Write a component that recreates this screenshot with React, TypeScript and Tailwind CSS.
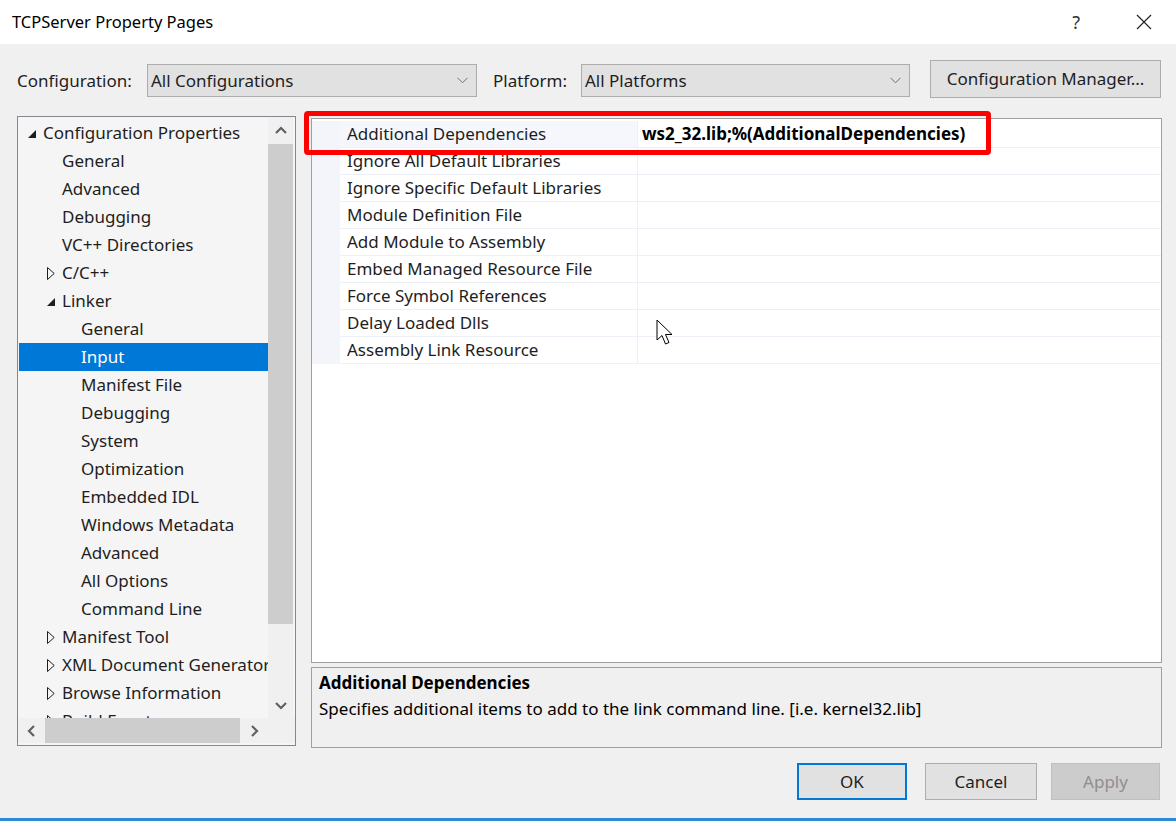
import React from "react";

type TreeItem = {
  label: string;
  level: 0 | 1 | 2;
  arrow?: "open" | "closed";
  selected?: boolean;
};

const treeItems: TreeItem[] = [
  { label: "Configuration Properties", level: 0, arrow: "open" },
  { label: "General", level: 1 },
  { label: "Advanced", level: 1 },
  { label: "Debugging", level: 1 },
  { label: "VC++ Directories", level: 1 },
  { label: "C/C++", level: 1, arrow: "closed" },
  { label: "Linker", level: 1, arrow: "open" },
  { label: "General", level: 2 },
  { label: "Input", level: 2, selected: true },
  { label: "Manifest File", level: 2 },
  { label: "Debugging", level: 2 },
  { label: "System", level: 2 },
  { label: "Optimization", level: 2 },
  { label: "Embedded IDL", level: 2 },
  { label: "Windows Metadata", level: 2 },
  { label: "Advanced", level: 2 },
  { label: "All Options", level: 2 },
  { label: "Command Line", level: 2 },
  { label: "Manifest Tool", level: 1, arrow: "closed" },
  { label: "XML Document Generator", level: 1, arrow: "closed" },
  { label: "Browse Information", level: 1, arrow: "closed" },
  { label: "Build Events", level: 1, arrow: "closed" },
];

const properties: { name: string; value?: string }[] = [
  { name: "Additional Dependencies", value: "ws2_32.lib;%(AdditionalDependencies)" },
  { name: "Ignore All Default Libraries" },
  { name: "Ignore Specific Default Libraries" },
  { name: "Module Definition File" },
  { name: "Add Module to Assembly" },
  { name: "Embed Managed Resource File" },
  { name: "Force Symbol References" },
  { name: "Delay Loaded Dlls" },
  { name: "Assembly Link Resource" },
];

const indent: Record<number, string> = {
  0: "w-0",
  1: "w-[19px]",
  2: "w-[38px]",
};

function Arrow({ kind }: { kind?: "open" | "closed" }) {
  if (kind === "open") {
    return (
      <svg width="8" height="8" viewBox="0 0 8 8" className="mt-[1px]">
        <polygon points="8,0 8,8 0,8" fill="#1e1e1e" />
      </svg>
    );
  }
  if (kind === "closed") {
    return (
      <svg width="8" height="13" viewBox="0 0 8 13">
        <polygon points="0.5,0.5 7.2,6.5 0.5,12.5" fill="none" stroke="#1e1e1e" strokeWidth="1" />
      </svg>
    );
  }
  return null;
}

function Chevron({ dir }: { dir: "up" | "down" | "left" | "right" }) {
  const pts: Record<string, string> = {
    up: "1,7 6,2 11,7",
    down: "1,2 6,7 11,2",
    left: "7,1 2,6 7,11",
    right: "2,1 7,6 2,11",
  };
  const vertical = dir === "up" || dir === "down";
  return (
    <svg width={vertical ? 12 : 9} height={vertical ? 9 : 12} viewBox={vertical ? "0 0 12 9" : "0 0 9 12"}>
      <polyline points={pts[dir]} fill="none" stroke="#606060" strokeWidth="2.2" />
    </svg>
  );
}

function DropChevron() {
  return (
    <svg width="11" height="7" viewBox="0 0 11 7">
      <polyline points="0.5,0.8 5.5,5.8 10.5,0.8" fill="none" stroke="#707070" strokeWidth="1" />
    </svg>
  );
}

function Dropdown({ value, width }: { value: string; width: string }) {
  return (
    <div
      className={`${width} h-[33px] mt-[4px] border border-[#adadad] bg-[#e1e1e1] flex items-center justify-between pl-[3px] pr-[8px]`}
    >
      <span>{value}</span>
      <DropChevron />
    </div>
  );
}

function Tree() {
  return (
    <div className="w-[279px] h-[630px] border border-[#828790] bg-[#f5f5f5] flex flex-col">
      <div className="flex flex-1 min-h-0">
        <div className="w-[250px] overflow-hidden pt-[2px]">
          {treeItems.map((item, i) => (
            <div
              key={i}
              className={`h-[28px] flex items-center whitespace-nowrap ${
                item.selected ? "bg-[#0078d7] text-white ml-[1px]" : "text-[#1e1e1e]"
              }`}
            >
              <div className={`${indent[item.level]} shrink-0`} />
              <div className={`${item.selected ? "w-[24px]" : "w-[25px]"} shrink-0 flex items-center pl-[10px]`}>
                <Arrow kind={item.arrow} />
              </div>
              <span>{item.label}</span>
            </div>
          ))}
        </div>
        <div className="w-[25px] flex flex-col bg-[#f0f0f0]">
          <div className="h-[27px] flex items-center justify-center">
            <Chevron dir="up" />
          </div>
          <div className="h-[480px] bg-[#cdcdcd]" />
          <div className="flex-1" />
          <div className="h-[25px] flex items-center justify-center">
            <Chevron dir="down" />
          </div>
        </div>
      </div>
      <div className="h-[25px] flex bg-[#f0f0f0] mb-[2px]">
        <div className="w-[27px] flex items-center justify-center">
          <Chevron dir="left" />
        </div>
        <div className="w-[195px] bg-[#cdcdcd]" />
        <div className="w-[28px] flex items-center justify-center">
          <Chevron dir="right" />
        </div>
        <div className="w-[25px] bg-[#f0f0f0]" />
      </div>
    </div>
  );
}

function PropertyGrid() {
  return (
    <div className="h-[545px] mt-[2px] border border-[#a0a0a0] bg-white pt-[2px]">
      {properties.map((p, i) => (
        <div key={p.name} className="h-[27px] flex">
          <div className="w-[28px] bg-[#f3f5fa] shrink-0" />
          <div
            className={`w-[298px] shrink-0 pl-[7px] flex items-center border-b border-r border-[#edf1f7] ${
              i === 0 ? "bg-[#f5f7fc]" : ""
            }`}
          >
            {p.name}
          </div>
          <div className="flex-1 pl-[4px] flex items-center border-b border-[#edf1f7] font-bold text-black">
            {p.value}
          </div>
        </div>
      ))}
    </div>
  );
}

function Button({
  label,
  width,
  primary,
  disabled,
}: {
  label: string;
  width: string;
  primary?: boolean;
  disabled?: boolean;
}) {
  return (
    <div
      className={`${width} h-[37px] flex items-center justify-center ${
        primary
          ? "border-2 border-[#0078d7] bg-[#e1e1e1]"
          : disabled
          ? "border border-[#bfbfbf] bg-[#cccccc] text-[#8f8f8f]"
          : "border border-[#adadad] bg-[#e1e1e1]"
      }`}
    >
      {label}
    </div>
  );
}

function Cursor() {
  return (
    <svg width="20" height="28" viewBox="0 0 20 28" className="absolute left-[656px] top-[319px]">
      <path
        d="M1,1 L1,21 L6,16.5 L9.5,25 L13,23.5 L9.5,15.5 L16,15.5 Z"
        fill="#fff"
        stroke="#000"
        strokeWidth="1"
        strokeLinejoin="round"
      />
    </svg>
  );
}

export default function App() {
  return (
    <div
      className="w-[1176px] h-[821px] bg-[#f0f0f0] flex flex-col relative overflow-hidden text-[17px] text-[#1e1e1e]"
      style={{ fontFamily: '"Noto Sans", "Open Sans", sans-serif' }}
    >
      {/* title bar */}
      <div className="h-[44px] bg-white flex items-center pl-[12px] shrink-0">
        <span className="text-[16.5px] text-black">TCPServer Property Pages</span>
        <div className="flex-1" />
        <span className="text-[18px] text-[#333] mr-[56px]">?</span>
        <svg width="16" height="16" viewBox="0 0 16 16" className="mr-[24px]">
          <path d="M1,1 L15,15 M15,1 L1,15" stroke="#222" strokeWidth="1.2" />
        </svg>
      </div>

      {/* configuration row */}
      <div className="h-[38px] mt-[16px] flex items-start pl-[17px] shrink-0">
        <div className="w-[130px] h-[33px] mt-[4px] flex items-center">Configuration:</div>
        <Dropdown value="All Configurations" width="w-[330px]" />
        <div className="w-[88px] h-[33px] mt-[4px] ml-[16px] flex items-center">Platform:</div>
        <Dropdown value="All Platforms" width="w-[329px]" />
        <div className="w-[231px] h-[38px] ml-[20px] border border-[#adadad] bg-[#e1e1e1] flex items-center justify-center">
          Configuration Manager...
        </div>
      </div>

      {/* main */}
      <div className="flex mt-[18px] pl-[17px] shrink-0">
        <Tree />
        <div className="w-[851px] ml-[15px] flex flex-col">
          <PropertyGrid />
          <div className="h-[81px] mt-[4px] border border-[#a0a0a0] bg-[#f0f0f0] pl-[7px] pt-[2px]">
            <div className="font-bold text-black">Additional Dependencies</div>
            <div className="text-black">
              Specifies additional items to add to the link command line. [i.e. kernel32.lib]
            </div>
          </div>
        </div>
      </div>

      {/* buttons */}
      <div className="flex justify-end mt-[15px] pr-[16px] shrink-0">
        <Button label="OK" width="w-[110px]" primary />
        <div className="w-[18px]" />
        <Button label="Cancel" width="w-[112px]" />
        <div className="w-[14px]" />
        <Button label="Apply" width="w-[109px]" disabled />
      </div>

      <div className="flex-1" />
      <div className="h-[3px] bg-[#2b88d8] shrink-0" />

      {/* annotation */}
      <div className="absolute left-[304px] top-[111px] w-[687px] h-[44px] border-[5px] border-[#ff0000] rounded-[4px]" />
      <Cursor />
    </div>
  );
}
